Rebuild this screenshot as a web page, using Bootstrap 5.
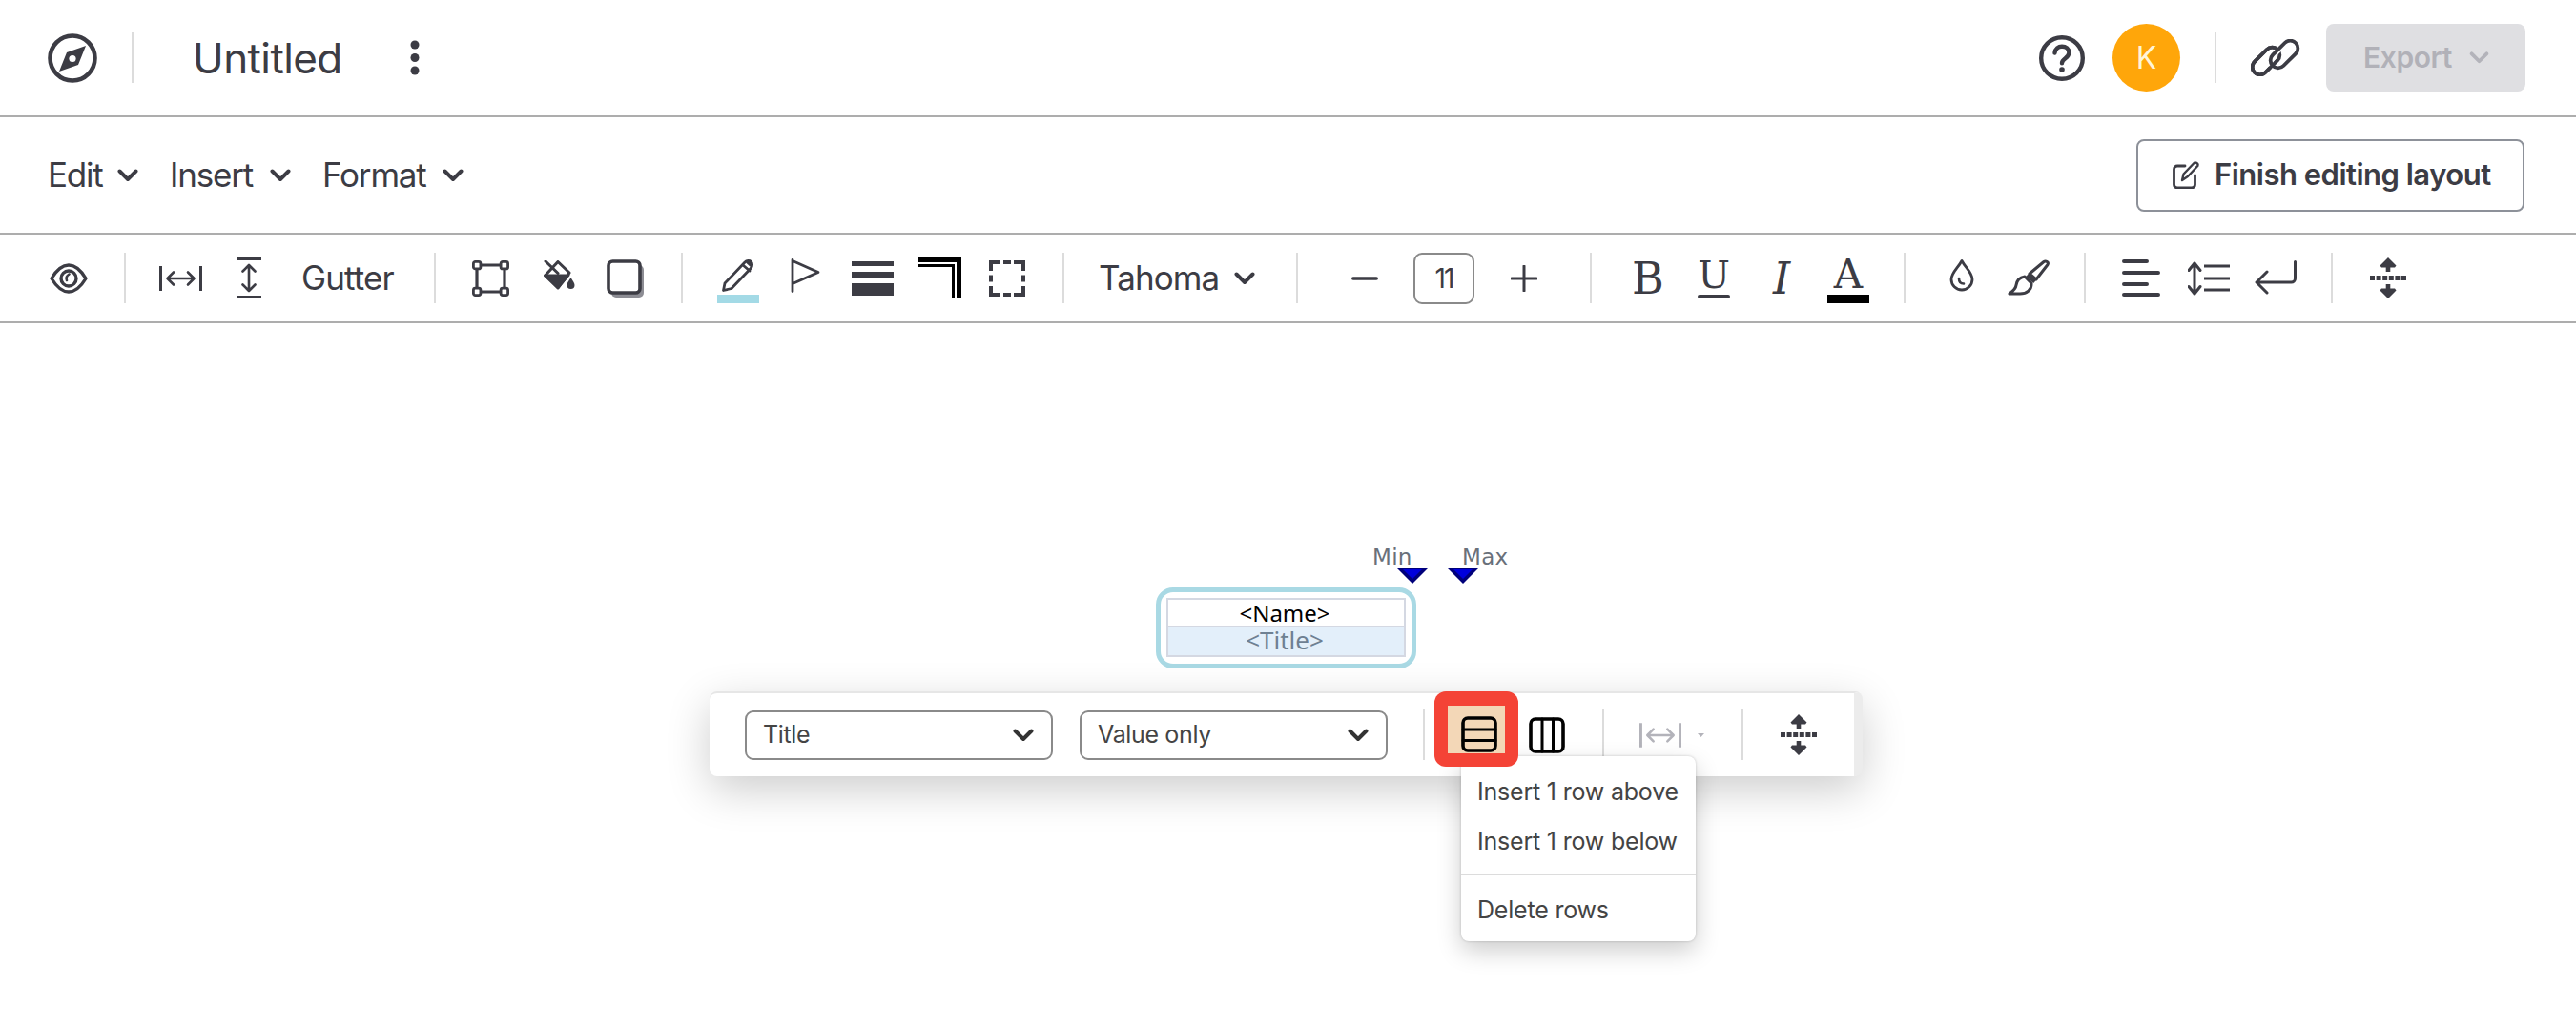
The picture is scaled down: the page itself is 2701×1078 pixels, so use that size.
<!DOCTYPE html>
<html lang="en"><head><meta charset="utf-8"><title>Untitled</title>
<link href="https://cdn.jsdelivr.net/npm/bootstrap@5.3.0/dist/css/bootstrap.min.css" rel="stylesheet">
<style>
:root{--ink:#3c3c44;--rule:#adadad;--sep:#dcdcdc}
html,body{height:100%}
body{margin:0;width:2701px;height:1078px;overflow:hidden;background:#fff;color:var(--ink);font-family:Inter,"Noto Sans",sans-serif}
svg{flex-shrink:0;display:block}
.ico{fill:none;stroke:currentColor;stroke-width:3;stroke-linecap:round;stroke-linejoin:round}
.bar-a{height:123px;border-bottom:2px solid var(--rule);padding:0 53px 0 50px}
.bar-b{height:123px;border-bottom:2px solid var(--rule);padding:0 54px 0 50px}
.bar-c{height:93px;border-bottom:2px solid var(--rule);padding:0 0 0 52px}
.vsep{width:2px;height:53px;background:var(--sep);flex-shrink:0}
.doc-name{font-size:44px;letter-spacing:-.6px;line-height:1;width:155px;white-space:nowrap}
.menu-word{font-size:35px;line-height:1;letter-spacing:-1.2px;white-space:nowrap}
.w-edit{width:57px}.w-insert{width:89px}.w-format{width:110px}.w-gutter{width:96px}.w-tahoma{width:126px}
.tool-word{font-size:35px;line-height:1;letter-spacing:-.9px;white-space:nowrap}
.user-disc{width:71px;height:71px;border-radius:50%;background:#ffa60a;color:#fff5d8;font-size:32px;line-height:71px;text-align:center}
.export-btn,.export-btn:disabled{width:209px;height:71px;background:#dfdfe2;border:0;border-radius:8px;color:#b1b1b8;font-size:30px;font-weight:600;letter-spacing:-.4px;opacity:1;padding:0 38px 0 39px}
.finish-btn{width:407px;height:76px;border:2px solid #8d9199;border-radius:8px;background:#fff;color:var(--ink);font-size:31px;font-weight:600;letter-spacing:-.5px;padding:0 0 0 36px;white-space:nowrap}
.size-box{width:64px;height:54px;border:2px solid #8a8a8a;border-radius:9px;font-size:28px;line-height:1;letter-spacing:-2px}
.face{font-family:"DejaVu Serif",serif;font-size:46px;height:54px;line-height:54px;color:var(--ink);width:32px;text-align:center;position:relative;flex-shrink:0;white-space:nowrap}
.face-u{width:34px;font-size:40px;line-height:46px}
.face-u::after{content:"";position:absolute;left:0;right:0;top:44px;height:4px;border-radius:2px;background:var(--ink)}
.face-a{width:44px;height:52px;line-height:43px;font-size:42px}
.face-a::after{content:"";position:absolute;left:0;right:0;bottom:0;height:9px;background:#000}
.stage{height:739px;position:relative}
.name-tag{position:absolute;font-family:"DejaVu Sans",sans-serif;font-size:23px;line-height:1;color:#69707a;letter-spacing:.3px}
.tag-min{left:1439px;top:234px}.tag-max{left:1533px;top:234px}
.pin{position:absolute;top:257px}.pin-min{left:1465px}.pin-max{left:1518px}
.picked{position:absolute;left:1212px;top:277px;width:273px;height:85px;border:5px solid #a9d9e4;border-radius:18px;padding:6px}
.cell-grid{border:2px solid #d4d8e2;font-family:"Noto Sans","DejaVu Sans",sans-serif;font-size:24px;text-align:center;line-height:28px;color:#000;height:62px}
.cell-a{height:29px;background:#fff;border-bottom:2px solid #d4d8e2;line-height:27px;padding-right:3px}
.cell-b{height:29px;background:#e3effa;color:#6e8092;line-height:27px;font-size:26px;padding-right:3px}
.float-bar{position:absolute;left:744px;top:386px;width:1209px;height:89px;background:#fff;border-top:2px solid #e6e6e6;border-right:9px solid #ececec;border-radius:8px;box-shadow:0 14px 46px rgba(0,0,0,.2);padding-left:37px}
.float-bar .form-select{width:323px;height:52px;flex:none;border:2px solid #8a8a8a;border-radius:9px;font-family:Inter,sans-serif;font-size:25px;letter-spacing:-.35px;color:#444;padding:0 50px 0 17px;background-image:url("data:image/svg+xml,%3Csvg xmlns='http://www.w3.org/2000/svg' viewBox='0 0 22 14'%3E%3Cpath d='M2.500 2.500 11 11l8.500-8.500' fill='none' stroke='%23333' stroke-width='4' stroke-linecap='round' stroke-linejoin='round'/%3E%3C/svg%3E");background-size:22px 14px;background-position:right 18px center;box-shadow:none}
.red-btn{background:#f44336;border-radius:12px;padding:15px 14px 14px;position:relative;z-index:1060;align-self:flex-start;margin-top:-2px}
.red-core{width:60px;height:50px;background:#f3d7b7;display:flex;justify-content:flex-end;align-items:flex-end;padding:0 8px 1px 0}
.ink-black{color:#000}.ink-mute{color:#b3b3ba}
.float-bar .dropdown-menu{position:absolute;display:block;left:788px;top:66px;width:246px;height:194px;padding:11px 0 8px;margin:0;border:0;border-radius:8px;box-shadow:0 10px 26px rgba(0,0,0,.2),0 0 3px rgba(0,0,0,.2);min-width:0}
.float-bar .dropdown-item{height:52px;line-height:52px;padding:0 0 0 17px;font-size:25px;letter-spacing:-.2px;color:#444;white-space:nowrap}
.float-bar .dropdown-divider{margin:8px 0 10px;border-top:2px solid #dcdcdc;opacity:1}
.l10{margin-left:10px}.l11{margin-left:11px}.l16{margin-left:16px}.l17{margin-left:17px}.l26{margin-left:26px}.l27{margin-left:27px}.l28{margin-left:28px}.l29{margin-left:29px}.l32{margin-left:32px}.l33{margin-left:33px}.l34{margin-left:34px}.l35{margin-left:35px}.l36{margin-left:36px}.l37{margin-left:37px}.l38{margin-left:38px}.l39{margin-left:39px}.l40{margin-left:40px}.l42{margin-left:42px}.l43{margin-left:43px}.l46{margin-left:46px}.l55{margin-left:55px}.l56{margin-left:56px}.l62{margin-left:62px}.l73{margin-left:73px}
</style></head>
<body>
<svg width="0" height="0" class="position-absolute">
<defs><clipPath id="link-cut"><rect x="0" y="0" width="27" height="39"/></clipPath></defs>
<symbol id="chev" viewBox="0 0 22 14"><path d="M2.5 2.5 11 11l8.5-8.5" fill="none" stroke="currentColor" stroke-width="4" stroke-linecap="round" stroke-linejoin="round"/></symbol>
<symbol id="widen" viewBox="0 0 45 26"><path d="M1.5 0v26M43.5 0v26" stroke-width="3" stroke="currentColor" fill="none"/><path d="M9 13h27M15 6.500 8.500 13l6.500 6.500M30 6.500l6.500 6.500-6.500 6.500" stroke-width="2.600" stroke="currentColor" fill="none" stroke-linecap="round" stroke-linejoin="round"/></symbol>
<symbol id="move" viewBox="0 0 38 43"><path d="M0 21.500h38" stroke="currentColor" stroke-width="5" stroke-dasharray="5 1.600" fill="none"/><path d="M19 6v9M19 28v9" stroke="currentColor" stroke-width="4.600" fill="none"/><path d="M19 0l-8.500 8.500 1.500 2h14l1.500-2zM19 43l-8.500-8.500 1.500-2h14l1.500 2z" fill="currentColor"/></symbol>
</svg>

<header class="bar-a d-flex align-items-center">
  <svg width="52" height="52" viewBox="0 0 52 52" class="ico"><circle cx="26" cy="26" r="23.500" stroke-width="4.600"/><path d="M40 13 32 33 12 40l8-20z" fill="currentColor" stroke="none"/><circle cx="26" cy="26.500" r="3.600" fill="#fff" stroke="none"/></svg>
  <span class="vsep l36"></span>
  <span class="doc-name l62">Untitled</span>
  <svg width="10" height="37" viewBox="0 0 10 37" class="l73"><circle cx="5" cy="5" r="4.500" fill="currentColor"/><circle cx="5" cy="18.500" r="4.500" fill="currentColor"/><circle cx="5" cy="32" r="4.500" fill="currentColor"/></svg>
  <div class="ms-auto d-flex align-items-center">
    <svg width="48" height="48" viewBox="0 0 48 48" class="ico"><circle cx="24" cy="24" r="21.800" stroke-width="4.400"/><path d="M16.500 18.500c.6-4.500 3.700-6.800 7.500-6.800 4.200 0 7.400 2.700 7.400 6.500 0 5.800-7.400 6-7.400 11" stroke-width="4.400"/><circle cx="24" cy="36" r="2.800" fill="currentColor" stroke="none"/></svg>
    <span class="user-disc l29">K</span>
    <span class="vsep l36"></span>
    <svg width="52" height="39" viewBox="0 0 52 39" class="ico l36">
      <rect x="-17" y="-8" width="34" height="16" rx="8" transform="translate(16 23) rotate(-45)" stroke-width="3.800"/>
      <rect x="-17" y="-8" width="34" height="16" rx="8" transform="translate(35 16) rotate(-45)" stroke="#fff" stroke-width="7"/>
      <rect x="-17" y="-8" width="34" height="16" rx="8" transform="translate(35 16) rotate(-45)" stroke-width="3.800"/>
      <g clip-path="url(#link-cut)"><rect x="-17" y="-8" width="34" height="16" rx="8" transform="translate(16 23) rotate(-45)" stroke-width="3.800"/></g>
    </svg>
    <button class="btn export-btn l27 d-flex align-items-center justify-content-between" disabled>Export <svg width="21" height="13" class="ink-mute"><use href="#chev"/></svg></button>
  </div>
</header>

<nav class="bar-b d-flex align-items-center">
  <span class="menu-word w-edit">Edit</span>
  <svg width="22" height="14" class="l16"><use href="#chev"/></svg>
  <span class="menu-word w-insert l33">Insert</span>
  <svg width="22" height="14" class="l16"><use href="#chev"/></svg>
  <span class="menu-word w-format l33">Format</span>
  <svg width="22" height="14" class="l16"><use href="#chev"/></svg>
  <button class="btn finish-btn ms-auto d-flex align-items-center">
    <svg width="28" height="29" viewBox="0 0 28 29" class="ico me-3"><path d="M13 5H5a3.500 3.500 0 0 0-3.500 3.500v16A3.500 3.500 0 0 0 5 28h15a3.500 3.500 0 0 0 3.500-3.500V15" stroke-width="2.800"/><path d="M10 20l1.500-6.500L22.500 2c1-1 5-.5 3.800 3L16 16z" stroke-width="2.400"/></svg>
    Finish editing layout
  </button>
</nav>

<div class="bar-c d-flex align-items-center">
  <svg width="40" height="32" viewBox="0 0 40 32" class="ico"><path d="M2 16C8 6 14 2 20 2s12 4 18 14c-6 10-12 14-18 14S8 26 2 16z" stroke-width="3.400"/><circle cx="20" cy="16" r="8" stroke-width="3.400"/><path d="M20.500 11.500c-2.500 1.500-3.500 4-2.500 6.500" stroke-width="2.600"/></svg>
  <span class="vsep l38"></span>
  <svg width="45" height="26" class="l35"><use href="#widen"/></svg>
  <svg width="26" height="43" viewBox="0 0 26 43" class="ico l36"><path d="M0 1.500h26M0 41.500h26" stroke-width="3" stroke-linecap="butt"/><path d="M13 8v27M6.500 14.500 13 8l6.500 6.500M6.500 28.500 13 35l6.500-6.500" stroke-width="2.600"/></svg>
  <span class="tool-word w-gutter l42">Gutter</span>
  <span class="vsep l43"></span>
  <svg width="39" height="38" viewBox="0 0 39 38" class="ico l38"><path d="M5 5h29M5 33h29M5 5v28M34 5v28" stroke-width="3.200"/><g fill="#fff" stroke-width="2.800"><rect x="1.400" y="1.400" width="7.500" height="7.500" rx="2"/><rect x="30.100" y="1.400" width="7.500" height="7.500" rx="2"/><rect x="1.400" y="29.100" width="7.500" height="7.500" rx="2"/><rect x="30.100" y="29.100" width="7.500" height="7.500" rx="2"/></g></svg>
  <svg width="33" height="38" viewBox="0 0 33 38" class="ico l36"><path d="M15 1.500 27 13 15 29 1.500 16z" stroke-width="3"/><path d="M1.500 15.500h25L15 29z" fill="currentColor" stroke="currentColor" stroke-width="2"/><path d="M2 1 15 13.500" stroke-width="3"/><path d="M28.500 18c-2.500 4-4 6-4 8a4 4 0 0 0 8 0c0-2-1.500-4-4-8z" fill="currentColor" stroke="none"/></svg>
  <svg width="39" height="40" viewBox="0 0 39 40" class="l33"><rect x="5" y="6" width="34" height="34" rx="5" fill="#8d8d94"/><rect x="2" y="2" width="33" height="33" rx="4.500" fill="#fff" stroke="#3c3c44" stroke-width="3.600"/></svg>
  <span class="vsep l39"></span>
  <svg width="44" height="52" viewBox="0 0 44 52" class="ico l36"><path d="M6.500 38.500 8 31 29 9c2-2 5-2 6.500-.5s1.500 4.500 0 6.500L15 36.500z" stroke-width="2.800"/><path d="M27 12l7 6" stroke-width="2.800"/><path d="M30 9.500 36 15c1.500-2 1.500-5 0-6.500s-4.500-1.500-6 1z" fill="currentColor" stroke="none"/><rect x="0" y="43" width="44" height="9" fill="#a3dae6" stroke="none"/></svg>
  <svg width="31" height="42" viewBox="0 0 31 42" class="ico l33"><path d="M2 1.500v33M2 2.500 29 14.500 2 26.500" stroke-width="2.800"/></svg>
  <svg width="44" height="36" viewBox="0 0 44 36" class="l33"><rect y="0" width="44" height="5" fill="#3c3c44"/><rect y="11" width="44" height="7" fill="#3c3c44"/><rect y="23" width="44" height="13" fill="#3c3c44"/></svg>
  <svg width="45" height="43" viewBox="0 0 45 43" class="l26"><path d="M0 2.500h42.500V43" fill="none" stroke="#000" stroke-width="5"/><path d="M0 8.500h36.500V43" fill="none" stroke="#000" stroke-width="3"/></svg>
  <svg width="38" height="38" viewBox="0 0 38 38" class="l29" fill="none" stroke="#3c3c44" stroke-width="4"><path d="M2 11V2h10M26 2h10v9M36 15.500v7M36 27v9H26M12 36H2v-9M2 22.500v-7M15 2h8M15 36h8"/></svg>
  <span class="vsep l39"></span>
  <span class="tool-word w-tahoma l36">Tahoma</span>
  <svg width="22" height="14" class="l16"><use href="#chev"/></svg>
  <span class="vsep l43"></span>
  <svg width="28" height="4" viewBox="0 0 28 4" class="l56"><rect width="28" height="3.600" y=".2" rx="1.800" fill="#3c3c44"/></svg>
  <span class="size-box l37 d-flex align-items-center justify-content-center">11</span>
  <svg width="28" height="28" viewBox="0 0 28 28" class="ico l38"><path d="M14 1v26M1 14h26" stroke-width="3"/></svg>
  <span class="vsep l55"></span>
  <span class="face l42">B</span>
  <span class="face face-u l37">U</span>
  <span class="face fst-italic l38">I</span>
  <span class="face face-a l32">A</span>
  <span class="vsep l36"></span>
  <svg width="26" height="40" viewBox="0 0 26 40" class="ico l46"><path d="M13 1.500C9 9 2 14 2 21a11 11 0 0 0 22 0C24 14 17 9 13 1.500z" stroke-width="2.800"/><path d="M10 20c0 3.500 2 5.500 5 5.500" stroke-width="2.600"/></svg>
  <svg width="44" height="39" viewBox="0 0 44 39" class="ico l35"><path d="M38 2.500C40 1 43.500 3 42 5.500L30 21l-7-6z" stroke-width="3"/><path d="M21 16l8 7" stroke-width="5.500" stroke-linecap="butt"/><path d="M18 18c-6 1-8.500 5-9 9-.3 3-3 6-7 9h11c7 0 12.500-4 12-11z" stroke-width="3"/></svg>
  <span class="vsep l36"></span>
  <svg width="40" height="39" viewBox="0 0 40 39" class="ico l38"><path d="M2 2h24M2 14h36M2 26h24M2 37h36" stroke-width="4"/></svg>
  <svg width="44" height="36" viewBox="0 0 44 36" class="ico l29"><path d="M7 2v32M1 9.500 7 2l6 7.500M1 26.500 7 34l6-7.500" stroke-width="3"/><path d="M17 5h27M17 18h27M17 30h27" stroke-width="3.200" stroke-linecap="butt"/></svg>
  <svg width="44" height="38" viewBox="0 0 44 38" class="ico l26"><path d="M42.500 1.500V19a4 4 0 0 1-4 4H3M13 12 2 23l11 11" stroke-width="3"/></svg>
  <span class="vsep l36"></span>
  <svg width="38" height="43" class="l39"><use href="#move"/></svg>
</div>

<main class="stage">
  <span class="name-tag tag-min">Min</span>
  <span class="name-tag tag-max">Max</span>
  <svg class="pin pin-min" width="32" height="16" viewBox="0 0 32 16"><path d="M0 0h32L16 16z" fill="#00007a"/><path d="M6 1h20L16 11z" fill="#0000dc"/></svg>
  <svg class="pin pin-max" width="32" height="16" viewBox="0 0 32 16"><path d="M0 0h32L16 16z" fill="#00007a"/><path d="M6 1h20L16 11z" fill="#0000dc"/></svg>
  <div class="picked"><div class="cell-grid"><div class="cell-a">&lt;Name&gt;</div><div class="cell-b">&lt;Title&gt;</div></div></div>

  <div class="float-bar d-flex align-items-center">
    <select class="form-select" aria-label="Field"><option>Title</option></select>
    <select class="form-select l28" aria-label="Display"><option>Value only</option></select>
    <span class="vsep l37"></span>
    <div class="red-btn l10"><div class="red-core"><svg width="38" height="38" viewBox="0 0 38 38" class="ico ink-black"><rect x="2" y="2" width="34" height="34" rx="5" stroke-width="3.600"/><path d="M2 14h34M2 25.500h34" stroke-width="3"/></svg></div></div>
    <svg width="38" height="38" viewBox="0 0 38 38" class="ico ink-black l11"><rect x="2" y="2" width="34" height="34" rx="5" stroke-width="3.600"/><path d="M14 2v34M25.500 2v34" stroke-width="3"/></svg>
    <span class="vsep l39"></span>
    <svg width="44" height="26" class="ink-mute l37"><use href="#widen"/></svg>
    <svg width="7" height="4" viewBox="0 0 7 4" class="ink-mute l17"><path d="M0 0h7L3.500 4z" fill="currentColor"/></svg>
    <span class="vsep l39"></span>
    <svg width="38" height="43" class="l39"><use href="#move"/></svg>
    <div class="dropdown-menu show">
      <a class="dropdown-item" href="#">Insert 1 row above</a>
      <a class="dropdown-item" href="#">Insert 1 row below</a>
      <hr class="dropdown-divider">
      <a class="dropdown-item" href="#">Delete rows</a>
    </div>
  </div>
</main>
<script src="https://cdn.jsdelivr.net/npm/bootstrap@5.3.0/dist/js/bootstrap.bundle.min.js"></script>
</body></html>
